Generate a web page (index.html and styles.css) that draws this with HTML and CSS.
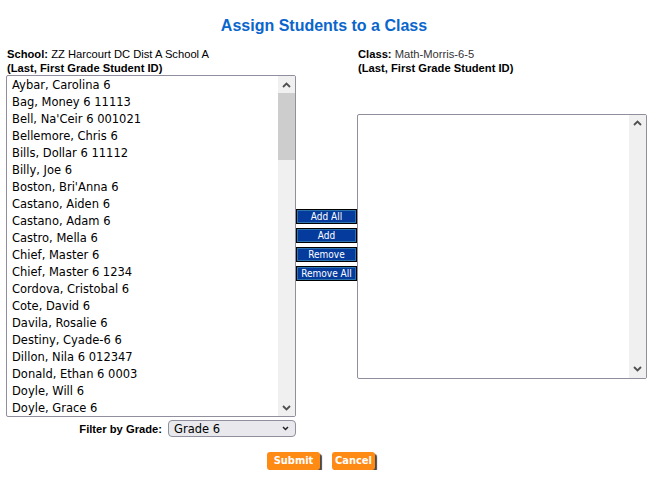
FILE: index.html
```html
<!DOCTYPE html>
<html lang="en">
<head>
<meta charset="utf-8">
<title>Assign Students to a Class</title>
<link rel="stylesheet" href="styles.css">
</head>
<body>
<div class="page">
  <h1 class="title">Assign Students to a Class</h1>
  <div class="assign">
    <div class="labels">
      <div><b>School:</b> ZZ Harcourt DC Dist A School A</div>
      <div><b>(Last, First Grade Student ID)</b></div>
    </div>
    <div class="spacer"></div>
    <div class="labels">
      <div><b>Class:</b> <span class="muted">Math-Morris-6-5</span></div>
      <div><b>(Last, First Grade Student ID)</b></div>
    </div>

    <div class="listbox tall" role="listbox">
      <div class="items">
        <div class="item">Aybar, Carolina 6</div>
        <div class="item">Bag, Money 6 11113</div>
        <div class="item">Bell, Na'Ceir 6 001021</div>
        <div class="item">Bellemore, Chris 6</div>
        <div class="item">Bills, Dollar 6 11112</div>
        <div class="item">Billy, Joe 6</div>
        <div class="item">Boston, Bri'Anna 6</div>
        <div class="item">Castano, Aiden 6</div>
        <div class="item">Castano, Adam 6</div>
        <div class="item">Castro, Mella 6</div>
        <div class="item">Chief, Master 6</div>
        <div class="item">Chief, Master 6 1234</div>
        <div class="item">Cordova, Cristobal 6</div>
        <div class="item">Cote, David 6</div>
        <div class="item">Davila, Rosalie 6</div>
        <div class="item">Destiny, Cyade-6 6</div>
        <div class="item">Dillon, Nila 6 012347</div>
        <div class="item">Donald, Ethan 6 0003</div>
        <div class="item">Doyle, Will 6</div>
        <div class="item">Doyle, Grace 6</div>
      </div>
      <div class="scrollbar">
        <div class="sb-btn"><svg width="9" height="6" viewBox="0 0 9 6"><polyline points="1,5 4.5,1.5 8,5" fill="none" stroke="#505050" stroke-width="1.8"/></svg></div>
        <div class="sb-track"><div class="sb-thumb"></div></div>
        <div class="sb-btn"><svg width="9" height="6" viewBox="0 0 9 6"><polyline points="1,1 4.5,4.5 8,1" fill="none" stroke="#505050" stroke-width="1.8"/></svg></div>
      </div>
    </div>

    <div class="mid">
      <button class="move">Add All</button>
      <button class="move">Add</button>
      <button class="move">Remove</button>
      <button class="move">Remove All</button>
    </div>

    <div class="listbox short" role="listbox">
      <div class="items"></div>
      <div class="scrollbar">
        <div class="sb-btn"><svg width="9" height="6" viewBox="0 0 9 6"><polyline points="1,5 4.5,1.5 8,5" fill="none" stroke="#505050" stroke-width="1.8"/></svg></div>
        <div class="sb-track"></div>
        <div class="sb-btn"><svg width="9" height="6" viewBox="0 0 9 6"><polyline points="1,1 4.5,4.5 8,1" fill="none" stroke="#505050" stroke-width="1.8"/></svg></div>
      </div>
    </div>

    <div class="filter">
      <span class="filter-label">Filter by Grade:</span>
      <div class="select">
        <span>Grade 6</span>
        <svg width="7" height="5" viewBox="0 0 7 5"><polyline points="1,1 3.5,3.5 6,1" fill="none" stroke="#222" stroke-width="1.5"/></svg>
      </div>
    </div>
  </div>

  <div class="actions">
    <button class="orange submit">Submit</button>
    <button class="orange cancel">Cancel</button>
  </div>
</div>
</body>
</html>
```
FILE: styles.css
```css
html, body {
  margin: 0;
  padding: 0;
  background: #fff;
}
body {
  font-family: "Liberation Sans", Arial, sans-serif;
  color: #000;
}
.page {
  width: 648px;
}
.title {
  margin: 0;
  padding-top: 16px;
  height: 20px;
  line-height: 20px;
  font-size: 16px;
  font-weight: bold;
  color: #0a66cc;
  text-align: center;
}
.assign {
  display: grid;
  grid-template-columns: 290px 61px 290px;
  align-items: center;
  margin-top: 10px;
  margin-left: 6px;
}
.labels {
  align-self: start;
  font-size: 11.2px;
  line-height: 14px;
  padding-top: 1px;
  padding-left: 1px;
}
.labels .muted {
  color: #333;
}
.listbox {
  display: flex;
  border: 1px solid #8f8f9d;
  border-radius: 2px;
  background: #fff;
  box-sizing: border-box;
  overflow: hidden;
}
.listbox.tall {
  height: 342px;
}
.listbox.short {
  height: 265px;
}
.items {
  flex: 1;
  overflow: hidden;
  padding-top: 1px;
  font-family: "DejaVu Sans", Verdana, sans-serif;
  font-size: 11.5px;
}
.item {
  height: 17px;
  line-height: 17px;
  padding-left: 5px;
  white-space: nowrap;
}
.scrollbar {
  width: 17px;
  display: flex;
  flex-direction: column;
  background: #f0f0f0;
}
.sb-btn {
  height: 17px;
  display: flex;
  align-items: center;
  justify-content: center;
}
.sb-track {
  flex: 1;
}
.sb-thumb {
  height: 67px;
  background: #cdcdcd;
}
.mid {
  display: flex;
  flex-direction: column;
  gap: 4px;
  align-items: flex-start;
  margin-bottom: 2px;
}
.move {
  width: 61px;
  height: 15px;
  margin: 0;
  padding: 0;
  background: #053b9c;
  border: 1px solid #000;
  box-shadow: inset 0 0 0 1px #2b74ad;
  color: #fff;
  font-family: "DejaVu Sans Condensed", "DejaVu Sans", sans-serif;
  font-stretch: condensed;
  font-size: 10px;
  line-height: 13px;
  text-align: center;
}
.filter {
  grid-column: 1;
  display: flex;
  justify-content: flex-end;
  align-items: center;
  gap: 6px;
  margin-top: 3px;
}
.filter-label {
  font-size: 11.2px;
  font-weight: bold;
}
.select {
  width: 128px;
  height: 17px;
  box-sizing: border-box;
  border: 1px solid #8f8f9d;
  border-radius: 4px;
  background: #e9e9ed;
  display: flex;
  align-items: center;
  justify-content: space-between;
  padding: 0 6px 0 5px;
  font-family: "DejaVu Sans", Verdana, sans-serif;
  font-size: 11.5px;
}
.actions {
  display: flex;
  justify-content: center;
  gap: 12px;
  margin-top: 15px;
  padding-right: 6px;
}
.orange {
  height: 18px;
  margin: 0;
  padding: 0;
  border: none;
  border-radius: 3px;
  background: #ff8a14;
  box-shadow: 2px 2px 1px #4a4a4a;
  color: #fff;
  font-family: "DejaVu Sans Condensed", "DejaVu Sans", sans-serif;
  font-stretch: condensed;
  font-weight: bold;
  font-size: 11px;
  line-height: 18px;
  text-align: center;
}
.submit {
  width: 53px;
}
.cancel {
  width: 43px;
}
```
